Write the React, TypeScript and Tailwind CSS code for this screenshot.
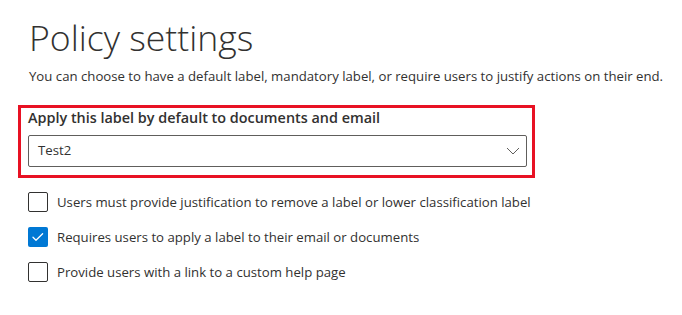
import React from 'react';

const FONT = { fontFamily: '"Segoe UI", "Open Sans", "Noto Sans", sans-serif' };

type Option = { label: string; checked: boolean };

const OPTIONS: Option[] = [
  { label: 'Users must provide justification to remove a label or lower classification label', checked: false },
  { label: 'Requires users to apply a label to their email or documents', checked: true },
  { label: 'Provide users with a link to a custom help page', checked: false },
];

function Checkbox({ checked }: { checked: boolean }) {
  if (checked) {
    return (
      <span className="flex h-5 w-5 shrink-0 items-center justify-center rounded-[2px] bg-[#0078d4]">
        <svg width="20" height="20" viewBox="0 0 20 20" fill="none">
          <path d="M5 10.3 L8 13.2 L14.6 6.8" stroke="#fff" strokeWidth="1.3" strokeLinecap="round" strokeLinejoin="round" />
        </svg>
      </span>
    );
  }
  return <span className="h-5 w-5 shrink-0 rounded-[2px] border border-[#323130] bg-white" />;
}

export default function App() {
  return (
    <div className="h-[315px] w-[682px] bg-white text-[#323130]" style={FONT}>
      <div className="pl-[29px] pt-[15px]">
        <h1 className="whitespace-nowrap text-[35.6px] font-light leading-[44px]">Policy settings</h1>
        <p className="mt-[7px] whitespace-nowrap text-[13.2px] leading-[20px]">
          You can choose to have a default label, mandatory label, or require users to justify actions on their end.
        </p>
      </div>

      {/* highlighted default label section */}
      <div className="ml-[18px] mt-[19px] w-[517px] border-[3px] border-[#e81123] pb-[8px] pl-[7px] pr-[5px]">
        <div className="text-[14.4px] font-semibold leading-[20px]">Apply this label by default to documents and email</div>
        <div className="mt-[7px] flex h-[32px] items-center justify-between rounded-[2px] border border-[#605e5c] pl-[9px] pr-[6px]">
          <span className="text-[13.2px]">Test2</span>
          <svg width="14" height="8" viewBox="0 0 14 8" fill="none">
            <path d="M1 1 L7 7 L13 1" stroke="#605e5c" strokeWidth="1" />
          </svg>
        </div>
      </div>

      <div className="mt-[14px] flex flex-col gap-[15px] pl-[28px]">
        {OPTIONS.map((o) => (
          <label key={o.label} className="flex items-center gap-[9px] text-[13.2px] leading-[20px]">
            <Checkbox checked={o.checked} />
            <span className="whitespace-nowrap">{o.label}</span>
          </label>
        ))}
      </div>
    </div>
  );
}
